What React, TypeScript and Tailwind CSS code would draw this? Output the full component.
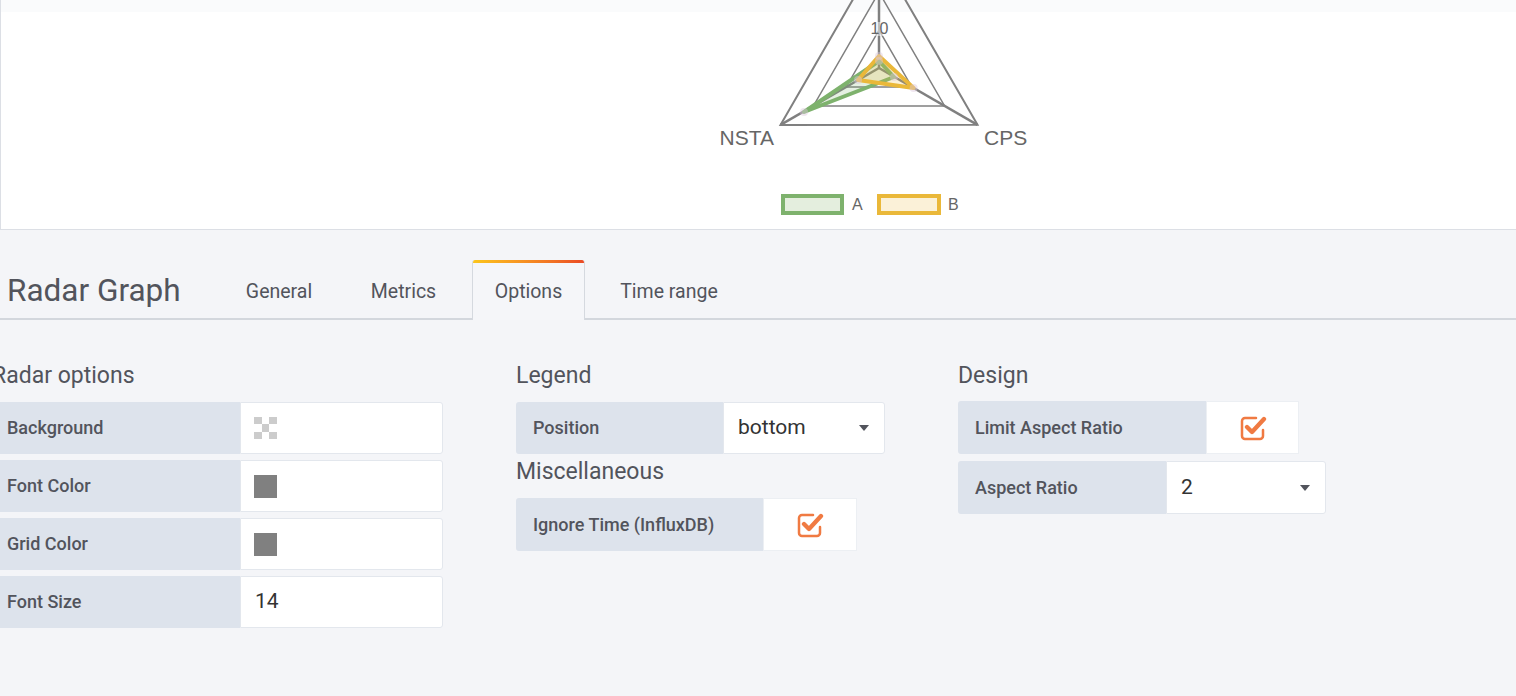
import React from "react";

function CheckIcon() {
  return (
    <svg width="28" height="28" viewBox="0 0 28 28" fill="none">
      <path
        d="M17 4 H6 a3 3 0 0 0 -3 3 v15 a3 3 0 0 0 3 3 h15 a3 3 0 0 0 3 -3 v-6"
        stroke="#f07a42"
        strokeWidth="2.5"
        strokeLinecap="round"
      />
      <path
        d="M8 13 L13 18 L25 5"
        stroke="#f07a42"
        strokeWidth="4.3"
        strokeLinecap="round"
        strokeLinejoin="round"
      />
    </svg>
  );
}

function Caret() {
  return (
    <svg width="10" height="6" viewBox="0 0 10 6">
      <path d="M0 0 H10 L5 6 Z" fill="#52545c" />
    </svg>
  );
}

function Label({ w, children }: { w: string; children: React.ReactNode }) {
  return (
    <div
      className={`${w} h-full flex items-center pl-[17px] pb-[1px] bg-[#dde3ec] rounded-l-[3px] text-[18px] font-medium text-[#52545c] whitespace-nowrap`}
    >
      {children}
    </div>
  );
}

function Header({ children, cls = "" }: { children: React.ReactNode; cls?: string }) {
  return (
    <div className={`text-[23px] leading-[27px] text-[#52545c] whitespace-nowrap ${cls}`}>{children}</div>
  );
}

function Radar() {
  const cx = 878;
  const cy = 68;
  const R = 113.7;
  const pt = (r: number, k: number) => {
    const ang = [-Math.PI / 2, (Math.PI / 6) * 5, Math.PI / 6][k];
    return [cx + r * Math.cos(ang), cy + r * Math.sin(ang)];
  };
  const tri = (r: number) =>
    [0, 1, 2].map((k) => pt(r, k).map((v) => v.toFixed(1)).join(",")).join(" ");
  const A = "878,61 803,112 893,77";
  const B = "878,56 857,80 912.6,88";
  return (
    <svg width="1516" height="229" className="block" style={{ fontFamily: "'Liberation Sans', Arial, sans-serif" }}>
      {[R / 3, (2 * R) / 3, R].map((r, i) => (
        <polygon key={i} points={tri(r)} fill="none" stroke="#808080" strokeWidth={i === 2 ? 2 : 1.5} />
      ))}
      {[0, 1, 2].map((k) => {
        const [x, y] = pt(R, k);
        return <line key={k} x1={cx} y1={cy} x2={x} y2={y} stroke="#808080" strokeWidth="2.5" />;
      })}
      <rect x="868" y="22" width="21" height="14" fill="rgba(255,255,255,0.5)" />
      <text x="878.5" y="34" textAnchor="middle" fontSize="16" fill="#666">10</text>
      <polygon points={A} fill="rgba(126,178,109,0.2)" stroke="#7eb26d" strokeWidth="4" strokeLinejoin="round" />
      <polygon points={B} fill="rgba(234,184,57,0.2)" stroke="#eab839" strokeWidth="4" strokeLinejoin="round" />
      {[[803, 112], [893, 77], [878, 61], [857, 80], [912.6, 88], [878, 56]].map(([x, y], i) => (
        <circle key={i} cx={x} cy={y} r="4" fill="rgba(220,200,220,0.45)" />
      ))}
      <text x="773" y="145" textAnchor="end" fontSize="21" fill="#666">NSTA</text>
      <text x="983" y="145" fontSize="21" fill="#666">CPS</text>
      <rect x="782" y="196" width="59" height="17" fill="#e4eede" stroke="#7eb26d" strokeWidth="4" />
      <text x="851" y="210" fontSize="16" fill="#666">A</text>
      <rect x="878" y="196" width="60" height="17" fill="#fbf1d8" stroke="#eab839" strokeWidth="4" />
      <text x="947" y="210" fontSize="16" fill="#666">B</text>
    </svg>
  );
}

export default function App() {
  return (
    <div
      className="w-[1516px] h-[696px] overflow-hidden bg-[#f4f5f8]"
      style={{ fontFamily: "Roboto, 'Liberation Sans', sans-serif" }}
    >
      {/* panel */}
      <div className="h-[230px] border-l border-b border-[#dcdfe5] bg-[linear-gradient(#fafbfc_0,#fafbfc_12px,#ffffff_12px)]">
        <Radar />
      </div>

      {/* tab bar */}
      <div className="h-[90px] flex items-end border-b-2 border-[#d3d7dd]">
        <div className="w-[223px] h-[58px] flex items-center pl-[7px] pt-[4px] text-[31.5px] text-[#52545c] whitespace-nowrap">
          Radar Graph
        </div>
        <div className="w-[112px] mr-[13px] h-[58px] flex items-center justify-center pt-[5px] text-[19.5px] text-[#52545c]">
          General
        </div>
        <div className="w-[111px] mr-[13px] h-[58px] flex items-center justify-center pt-[5px] text-[19.5px] text-[#52545c]">
          Metrics
        </div>
        <div className="w-[113px] mr-[12px] h-[60px] mb-[-2px] flex flex-col bg-[#f5f6f9] border-x border-[#d5d9df] rounded-t-[3px] overflow-hidden">
          <div className="h-[3px] bg-gradient-to-r from-[#fbc51c] to-[#ea4a25]" />
          <div className="flex-1 flex items-center justify-center text-[19.5px] text-[#52545c] pt-[1px]">
            Options
          </div>
        </div>
        <div className="w-[144px] h-[58px] flex items-center justify-center pt-[5px] text-[19.5px] text-[#52545c] whitespace-nowrap">
          Time range
        </div>
      </div>

      {/* content */}
      <div className="flex pt-[42px]">
        {/* left column */}
        <div className="w-[526px] ml-[-10px] shrink-0">
          <Header cls="mb-[13px] ml-[2px]">Radar options</Header>
          <div className="flex flex-col gap-[6px]">
            {[
              ["Background", "checker"],
              ["Font Color", "swatch"],
              ["Grid Color", "swatch"],
              ["Font Size", "14"],
            ].map(([l, v]) => (
              <div key={l} className="flex h-[52px] w-[453px]">
                <Label w="w-[250px]">{l}</Label>
                <div className="flex-1 h-full bg-white border border-[#e3e7ed] rounded-r-[3px] flex items-center pl-[13px]">
                  {v === "checker" && (
                    <div className="grid grid-cols-3 grid-rows-3 w-[23px] h-[23px]">
                      {[1, 0, 1, 0, 1, 0, 1, 0, 1].map((c, i) => (
                        <div key={i} className={c ? "bg-[#cccccc]" : "bg-white"} />
                      ))}
                    </div>
                  )}
                  {v === "swatch" && <div className="w-[23px] h-[23px] bg-[#808080]" />}
                  {v === "14" && <span className="text-[21px] text-[#333] pl-[1px]">14</span>}
                </div>
              </div>
            ))}
          </div>
        </div>

        {/* middle column */}
        <div className="w-[442px] shrink-0">
          <Header cls="mb-[13px]">Legend</Header>
          <div className="flex h-[52px] w-[369px]">
            <Label w="w-[207px]">Position</Label>
            <div className="flex-1 h-full bg-white border border-[#e3e7ed] rounded-r-[3px] flex items-center justify-between pl-[14px] pr-[15px]">
              <span className="text-[21px] text-[#333]">bottom</span>
              <Caret />
            </div>
          </div>
          <Header cls="mt-[4px] mb-[13px]">Miscellaneous</Header>
          <div className="flex h-[53px] w-[341px]">
            <Label w="w-[247px]">Ignore Time (InfluxDB)</Label>
            <div className="flex-1 h-full bg-white border border-[#eceff3] flex items-center justify-center">
              <CheckIcon />
            </div>
          </div>
        </div>

        {/* right column */}
        <div className="shrink-0">
          <Header cls="mb-[12px]">Design</Header>
          <div className="flex flex-col gap-[7px]">
            <div className="flex h-[53px] w-[341px]">
              <Label w="w-[248px]">Limit Aspect Ratio</Label>
              <div className="flex-1 h-full bg-white border border-[#eceff3] flex items-center justify-center">
                <CheckIcon />
              </div>
            </div>
            <div className="flex h-[53px] w-[368px]">
              <Label w="w-[208px]">Aspect Ratio</Label>
              <div className="flex-1 h-full bg-white border border-[#e3e7ed] rounded-r-[3px] flex items-center justify-between pl-[14px] pr-[15px]">
                <span className="text-[21px] text-[#333]">2</span>
                <Caret />
              </div>
            </div>
          </div>
        </div>
      </div>
    </div>
  );
}
